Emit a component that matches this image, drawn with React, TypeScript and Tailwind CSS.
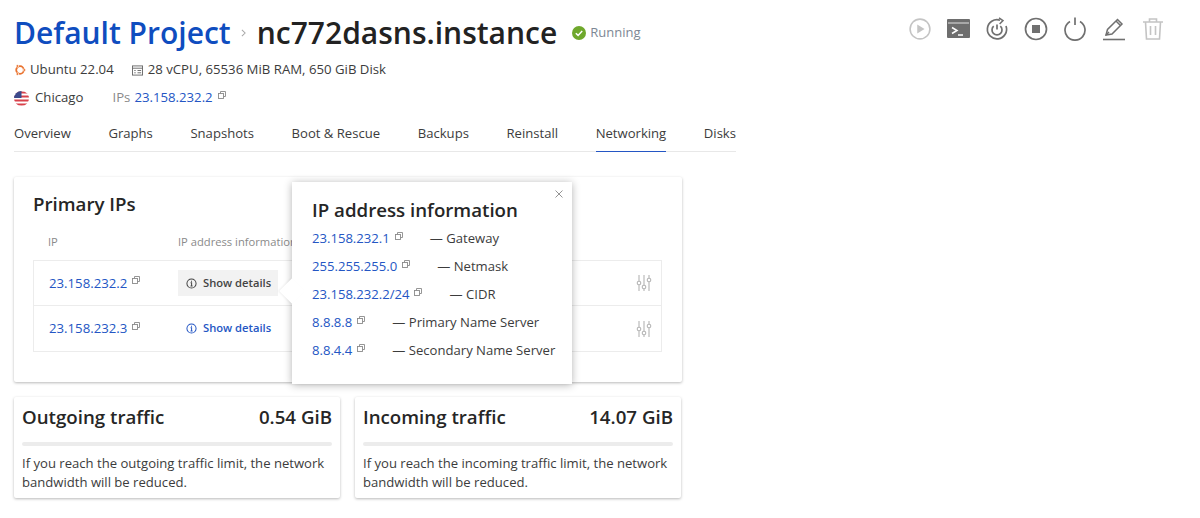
import React from 'react';

const Copy = ({ className = '' }: { className?: string }) => (
  <svg viewBox="0 0 8 8" className={`w-[8px] h-[8px] ${className}`} fill="none" stroke="#8a8a8a" strokeWidth="0.9">
    <rect x="0.5" y="2.5" width="5" height="5" fill="#fff" />
    <path d="M2.5 2.5V0.5H7.5V5.5H5.5" />
  </svg>
);

const Info = ({ color }: { color: string }) => (
  <svg viewBox="0 0 12 12" className="w-[11px] h-[11px] shrink-0" fill="none" stroke={color} strokeWidth="1.1">
    <circle cx="6" cy="6" r="5" />
    <path d="M5 5.3H6.1V8.6M4.9 8.6H7.2M6 3V4" />
  </svg>
);

const Sliders = () => (
  <svg viewBox="0 0 16 18" className="w-[16px] h-[18px]" fill="none" stroke="#b5b5b5" strokeWidth="1.1">
    <path d="M3 1V7M3 11V17M8 1V11M8 15V17M13 1V4M13 8V17" />
    <circle cx="3" cy="9" r="1.8" />
    <circle cx="8" cy="13" r="1.8" />
    <circle cx="13" cy="6" r="1.8" />
  </svg>
);

const Toolbar = () => (
  <div className="flex items-center gap-[15px] h-[24px]">
    <svg viewBox="0 0 24 24" className="w-[22px] h-[22px]" fill="none" stroke="#c4c4c4" strokeWidth="1.7">
      <circle cx="12" cy="12" r="10.8" />
      <path d="M9 7L17 12L9 17Z" fill="#c4c4c4" stroke="none" />
    </svg>
    <svg viewBox="0 0 24 24" className="w-[24px] h-[24px]">
      <rect x="1" y="2" width="23" height="19" rx="1" fill="#6e6e6e" />
      <path d="M2 6H23" stroke="#fff" strokeWidth="0.8" />
      <path d="M6 10.5L11 13.5L6 16.5" stroke="#fff" strokeWidth="1.5" fill="none" />
      <path d="M12 18H17" stroke="#fff" strokeWidth="1.5" />
    </svg>
    <svg viewBox="0 0 24 24" className="w-[24px] h-[24px]" fill="none" stroke="#707070" strokeWidth="1.7">
      <path d="M15 3.2A9.6 9.6 0 1 0 21 9" />
      <path d="M14 0.8L18 3.6L14.6 7" strokeWidth="1.5" />
      <path d="M12 7.5V12.5" />
      <path d="M8.7 9.2A5 5 0 1 0 15.3 9.2" />
    </svg>
    <svg viewBox="0 0 24 24" className="w-[24px] h-[24px]" fill="none" stroke="#707070" strokeWidth="1.7">
      <circle cx="12" cy="12" r="10.5" />
      <rect x="8" y="8" width="8" height="8" fill="#707070" stroke="none" />
    </svg>
    <svg viewBox="0 0 24 24" className="w-[24px] h-[24px]" fill="none" stroke="#707070" strokeWidth="1.7">
      <path d="M7 4.5A10 10 0 1 0 17 4.5" />
      <path d="M12 0.5V8" />
    </svg>
    <svg viewBox="0 0 24 24" className="w-[24px] h-[24px]" fill="none" stroke="#707070" strokeWidth="1.5">
      <path d="M4 18L5.5 12.5L15.5 2.5L20 7L10 17Z" />
      <path d="M14 4L18.5 8.5M4 18L7 15" />
      <path d="M1 22.5H23" strokeWidth="1.6" />
    </svg>
    <svg viewBox="0 0 24 24" className="w-[24px] h-[24px]" fill="none" stroke="#c4c4c4" strokeWidth="1.6">
      <path d="M2 5H22M8.5 5V2H15.5V5M4.5 5L5.5 22H18.5L19.5 5M9.5 9V18M14.5 9V18" />
    </svg>
  </div>
);

const tabs = ['Overview', 'Graphs', 'Snapshots', 'Boot & Rescue', 'Backups', 'Reinstall', 'Networking', 'Disks'];

const popRows = [
  ['23.158.232.1', 'Gateway'],
  ['255.255.255.0', 'Netmask'],
  ['23.158.232.2/24', 'CIDR'],
  ['8.8.8.8', 'Primary Name Server'],
  ['8.8.4.4', 'Secondary Name Server'],
];

const Popover = () => (
  <div className="absolute left-[292px] top-[182px] w-[280px] h-[202px] bg-white pl-[20px] pt-[15px] shadow-[0_1px_8px_rgba(0,0,0,0.3)] z-10">
    <div className="absolute -left-[9px] top-[100px] w-[18px] h-[18px] rotate-45 bg-white -z-10 shadow-[-1px_1px_2px_rgba(0,0,0,0.06)]" />
    <svg viewBox="0 0 8 8" className="absolute right-[9px] top-[8px] w-[8px] h-[8px]" stroke="#888" strokeWidth="0.9">
      <path d="M0.5 0.5L7.5 7.5M7.5 0.5L0.5 7.5" />
    </svg>
    <h3 className="text-[18.7px] leading-[25px] font-semibold text-[#262626]">IP address information</h3>
    <div className="mt-[3px]">
      {popRows.map(([ip, label]) => (
        <div key={ip} className="flex items-center h-[28px] text-[13.1px]">
          <span className="text-[#2456c4]">{ip}</span>
          <Copy className="ml-[5px] mb-[6px]" />
          <span className="ml-[27px] text-[#3c3c3c]">— {label}</span>
        </div>
      ))}
    </div>
  </div>
);

const IpRow = ({ ip, active, last }: { ip: string; active?: boolean; last?: boolean }) => (
  <div className={`flex items-center h-[45px] ${last ? '' : 'border-b border-[#ececec]'}`}>
    <div className="w-[144px] pl-[15px] pt-[1px] flex items-center text-[13.2px] text-[#2456c4]">
      {ip}
      <Copy className="ml-[5px] mb-[6px]" />
    </div>
    <div
      className={`flex items-center gap-[6px] h-[26px] w-[100px] pl-[8px] text-[11.2px] font-semibold ${
        active ? 'bg-[#f2f2f2] text-[#444444]' : 'text-[#2456c4]'
      }`}
    >
      <Info color={active ? '#444444' : '#2456c4'} />
      Show details
    </div>
    <div className="ml-auto pr-[9px] flex items-center">
      <Sliders />
    </div>
  </div>
);

const TrafficCard = ({ title, value, dir }: { title: string; value: string; dir: string }) => (
  <div className="w-[326px] h-[101px] bg-white rounded-[2px] px-[8px] pt-[7px] shadow-[0_1px_3px_rgba(0,0,0,0.28)]">
    <div className="flex justify-between items-center h-[26px] text-[18.7px] font-semibold text-[#262626]">
      <span>{title}</span>
      <span>{value}</span>
    </div>
    <div className="mt-[12px] h-[4px] bg-[#ececec] rounded-[2px]" />
    <p className="mt-[8px] text-[13.1px] leading-[19px] text-[#3c3c3c]">
      {`If you reach the ${dir} traffic limit, the network bandwidth will be reduced.`}
    </p>
  </div>
);

export default function App() {
  return (
    <div className="relative w-[1200px] h-[518px] overflow-hidden bg-white pl-[14px] font-['Open_Sans',sans-serif]">
      <div className="flex justify-between pr-[35px] pt-[13px]">
        <div className="flex items-center h-[40px]">
          <a className="text-[30px] leading-[40px] font-semibold text-[#0f4dbf]">Default Project</a>
          <svg viewBox="0 0 6 10" className="w-[5px] h-[8px] ml-[10px] mr-[11px]" fill="none" stroke="#a8a8a8" strokeWidth="1.3">
            <path d="M1 1L5 5L1 9" />
          </svg>
          <h1 className="text-[30px] leading-[40px] font-semibold text-[#222222]">nc772dasns.instance</h1>
          <svg viewBox="0 0 14 14" className="w-[14px] h-[14px] ml-[15px]">
            <circle cx="7" cy="7" r="7" fill="#6fa82c" />
            <path d="M3.8 7.2L6.1 9.4L10.2 5" stroke="#fff" strokeWidth="1.5" fill="none" />
          </svg>
          <span className="ml-[4px] text-[13px] text-[#7d8794]">Running</span>
        </div>
        <div className="pt-[4px]">
          <Toolbar />
        </div>
      </div>

      <div className="flex items-center h-[20px] mt-[7px] text-[13.2px] text-[#3c3c3c]">
        <svg viewBox="0 0 12 12" className="w-[12px] h-[12px] mr-[4px]" fill="none" stroke="#e9722e" strokeWidth="1.8">
          <circle cx="6" cy="6" r="3.8" />
          <circle cx="10.4" cy="6" r="1.3" fill="#e9722e" stroke="#fff" strokeWidth="0.6" />
          <circle cx="3.4" cy="2" r="1.3" fill="#e9722e" stroke="#fff" strokeWidth="0.6" />
          <circle cx="3.4" cy="10" r="1.3" fill="#e9722e" stroke="#fff" strokeWidth="0.6" />
        </svg>
        <span>Ubuntu 22.04</span>
        <svg viewBox="0 0 12 12" className="w-[11px] h-[11px] ml-[18px] mr-[5px]" fill="none" stroke="#666" strokeWidth="1">
          <rect x="0.5" y="1" width="11" height="10" />
          <path d="M0.5 3.5H11.5M2.5 6H4M6 6H10M2.5 8.5H4M6 8.5H10" />
        </svg>
        <span>28 vCPU, 65536 MiB RAM, 650 GiB Disk</span>
      </div>

      <div className="flex items-center h-[20px] mt-[8px] text-[13.2px]">
        <svg viewBox="0 0 15 15" className="w-[15px] h-[15px] mr-[6px]">
          <clipPath id="flag"><circle cx="7.5" cy="7.5" r="7.5" /></clipPath>
          <g clipPath="url(#flag)">
            <rect width="15" height="15" fill="#fff" />
            <path d="M0 1.5H15M0 5.5H15M0 9.5H15M0 13.5H15" stroke="#d8414b" strokeWidth="2" />
            <rect width="7.5" height="7" fill="#3c4a8c" />
          </g>
        </svg>
        <span className="text-[#3c3c3c]">Chicago</span>
        <span className="ml-[29px] text-[#8a8a8a]">IPs</span>
        <span className="ml-[4px] text-[#2456c4]">23.158.232.2</span>
        <Copy className="ml-[5px] mb-[6px]" />
      </div>

      <div className="flex w-[722px] h-[35px] mt-[9px] border-b border-[#e8e8e8] gap-[37.6px] text-[13.1px] text-[#3c3c3c]">
        {tabs.map((t) => (
          <div
            key={t}
            className={`h-[35px] shrink-0 whitespace-nowrap leading-[32px] ${t === 'Networking' ? 'border-b border-[#2456c4]' : ''}`}
          >
            {t}
          </div>
        ))}
      </div>

      <div className="w-[668px] h-[205px] mt-[25px] bg-white rounded-[2px] px-[19px] pt-[13px] shadow-[0_1px_3px_rgba(0,0,0,0.28)]">
        <h2 className="text-[18.7px] leading-[28px] font-semibold text-[#262626]">Primary IPs</h2>
        <div className="flex h-[28px] mt-[10px] items-center text-[11.2px] text-[#8a8a8a]">
          <span className="w-[145px] pl-[15px]">IP</span>
          <span>IP address information</span>
        </div>
        <div className="w-[629px] mt-[4px] border border-[#ececec]">
          <IpRow ip="23.158.232.2" active />
          <IpRow ip="23.158.232.3" last />
        </div>
      </div>

      <div className="flex gap-[15px] mt-[15px]">
        <TrafficCard title="Outgoing traffic" value="0.54 GiB" dir="outgoing" />
        <TrafficCard title="Incoming traffic" value="14.07 GiB" dir="incoming" />
      </div>

      <Popover />
    </div>
  );
}
